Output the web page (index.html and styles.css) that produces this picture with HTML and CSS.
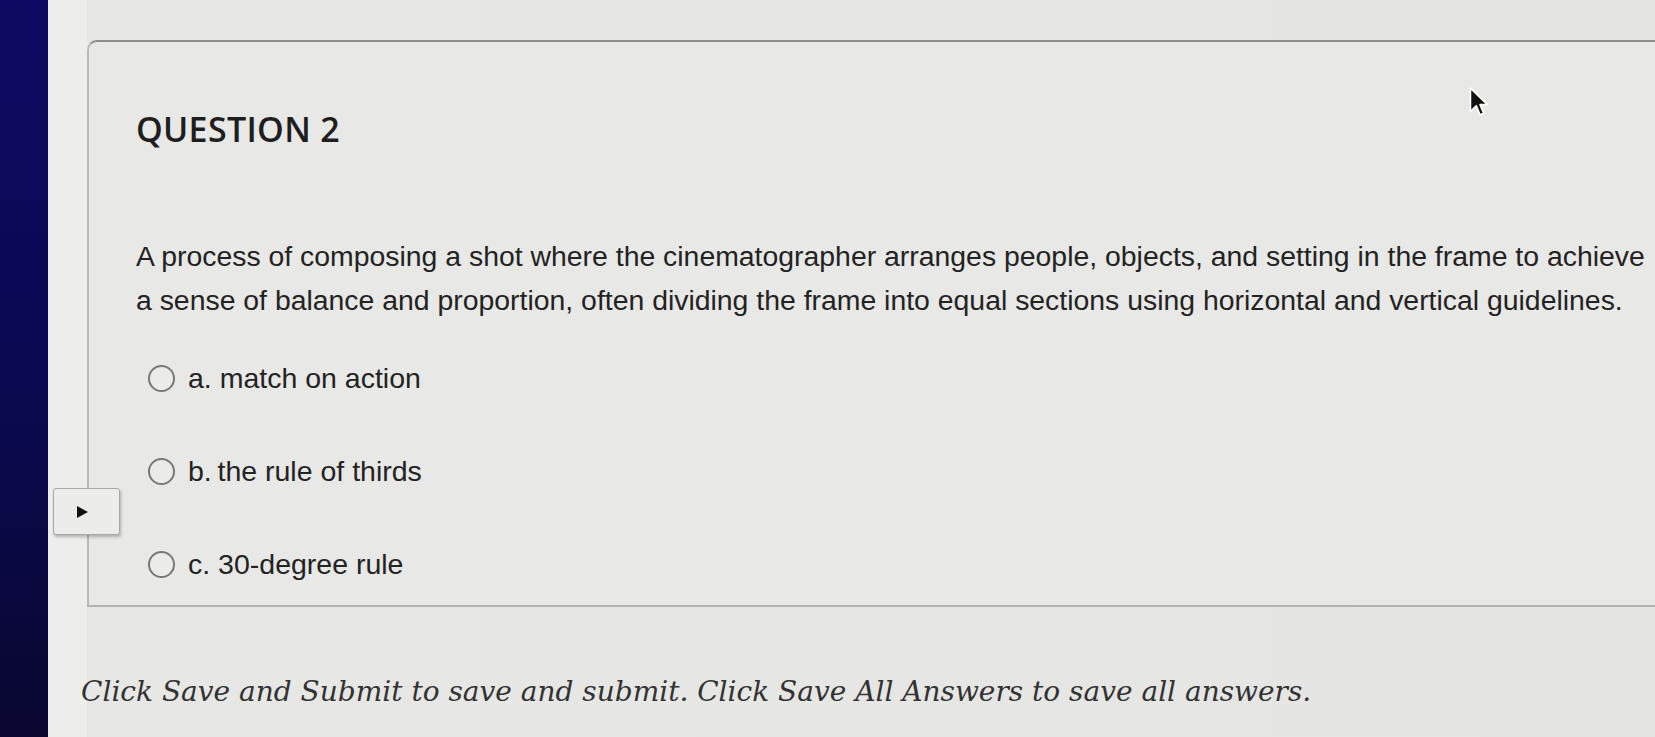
FILE: index.html
```html
<!DOCTYPE html>
<html>
<head>
<meta charset="utf-8">
<link rel="stylesheet" href="styles.css">
</head>
<body>
<div class="screen">
  <div class="sidebar"></div>
  <div class="main">
    <div class="card">
      <h2 class="qtitle">QUESTION 2</h2>
      <p class="qtext">A process of composing a shot where the cinematographer arranges people, objects, and setting in the frame to achieve a sense of balance and proportion, often dividing the frame into equal sections using horizontal and vertical guidelines.</p>
      <ul class="options">
        <li class="option"><span class="radio"></span><span class="label">a. match on action</span></li>
        <li class="option"><span class="radio"></span><span class="label">b.&thinsp;the rule of thirds</span></li>
        <li class="option"><span class="radio"></span><span class="label">c. 30-degree rule</span></li>
      </ul>
    </div>
    <p class="footer">Click Save and Submit to save and submit. Click Save All Answers to save all answers.</p>
  </div>
  <div class="tab"><span class="tri"></span></div>
  <svg class="cursor" width="24" height="32" viewBox="0 0 22 30">
    <path d="M2 2 L2 24 L7.5 18.5 L11 27 L14.5 25.5 L11 17.5 L18 17.5 Z" fill="#111" stroke="#fff" stroke-width="1.6" stroke-linejoin="round"/>
  </svg>
</div>
</body>
</html>
```
FILE: styles.css
```css
html, body {
  margin: 0;
  padding: 0;
}
body {
  width: 1655px;
  height: 737px;
  overflow: hidden;
  background: #e7e7e5;
}
.screen {
  position: relative;
  display: flex;
  width: 1655px;
  height: 737px;
  overflow: hidden;
}
.sidebar {
  width: 48px;
  flex: none;
  background: linear-gradient(180deg, #0c0a62 0%, #0b0950 55%, #090730 100%);
}
.main {
  flex: 1;
  min-width: 0;
  padding: 40px 0 0 39px;
  background: linear-gradient(90deg, #ededeb 0px, #ededeb 39px, #e7e7e5 39px, #e5e5e3 100%);
}
.card {
  border-top: 2px solid #8d8d8b;
  border-left: 2px solid #b9b9b7;
  border-bottom: 2px solid #b3b3b1;
  border-top-left-radius: 10px;
  padding: 65px 0 19px 47px;
  background: #e8e8e6;
}
.qtitle {
  margin: 0;
  font-family: "Open Sans", "Noto Sans", sans-serif;
  font-weight: 600;
  font-size: 34px;
  line-height: 44px;
  color: #1e1e1e;
  letter-spacing: 0.3px;
}
.qtext {
  margin: 83px 0 0 0;
  font-family: "Liberation Sans", Arial, sans-serif;
  font-size: 28.4px;
  line-height: 44px;
  color: #232323;
  width: 1525px;
}
.options {
  list-style: none;
  margin: 34px 0 0 12px;
  padding: 0;
  display: flex;
  flex-direction: column;
  gap: 49px;
}
.option {
  display: flex;
  align-items: center;
  gap: 13px;
  height: 44px;
}
.radio {
  width: 23px;
  height: 23px;
  border: 2px solid #787876;
  border-radius: 50%;
  background: #ebebe9;
  flex: none;
}
.label {
  font-family: "Liberation Sans", Arial, sans-serif;
  font-size: 28.5px;
  color: #232323;
}
.footer {
  margin: 68px 0 0 -6px;
  font-family: "DejaVu Serif", Georgia, serif;
  font-style: italic;
  font-size: 28px;
  line-height: 34px;
  color: #333333;
  white-space: nowrap;
}
.tab {
  position: absolute;
  left: 53px;
  top: 488px;
  width: 67px;
  height: 47px;
  box-sizing: border-box;
  border: 1px solid #a8a8a6;
  border-radius: 3px;
  background: #ececea;
  box-shadow: 1px 2px 3px rgba(0,0,0,0.25);
  display: flex;
  align-items: center;
  justify-content: center;
}
.tri {
  width: 0;
  height: 0;
  border-top: 6px solid transparent;
  border-bottom: 6px solid transparent;
  border-left: 11px solid #111;
  margin-right: 8px;
}
.cursor {
  position: absolute;
  left: 1468px;
  top: 86px;
}
```
